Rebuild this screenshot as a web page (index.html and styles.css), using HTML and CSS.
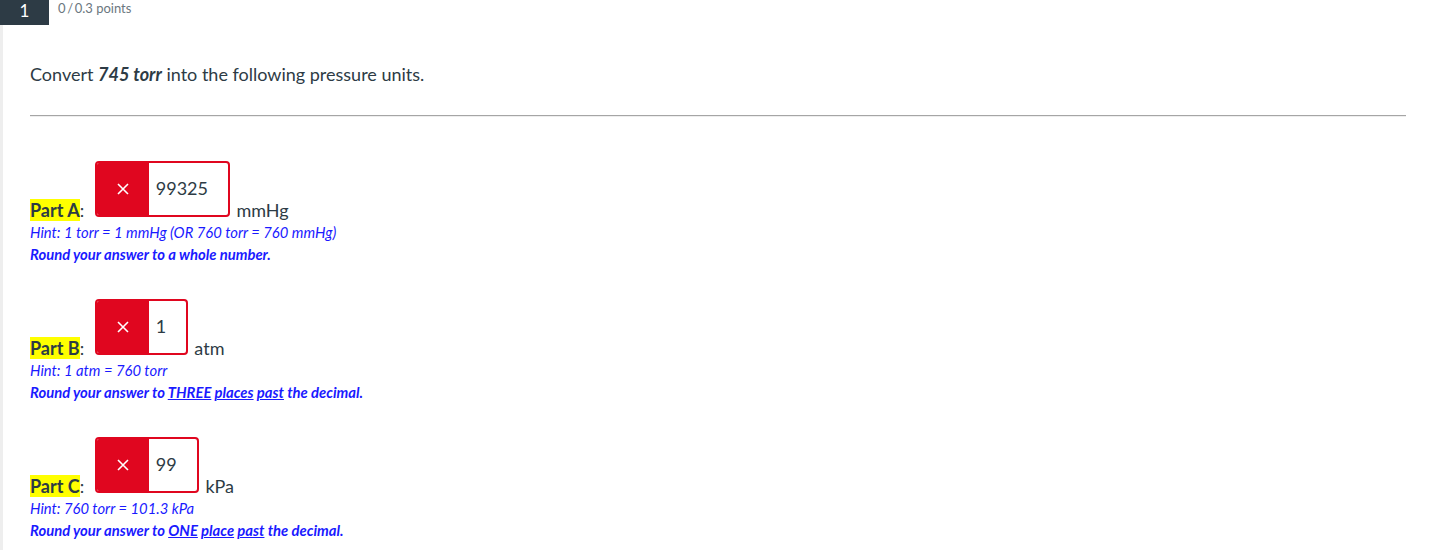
FILE: index.html
```html
<!DOCTYPE html>
<html lang="en">
<head>
    <meta charset="UTF-8">
    <meta name="viewport" content="width=device-width, initial-scale=1.0">
    <title>Question 1</title>
    <link rel="stylesheet" href="styles.css">
</head>
<body>
    <div class="question-header">
        <div class="question-number">1</div>
        <div class="points">0&#8201;/&#8201;0.3 points</div>
    </div>
    <div class="question-body">
        <p class="question-text">Convert <strong><em>745 torr</em></strong> into the following pressure units.</p>
        <hr class="divider">

        <div class="part">
            <p class="part-line">
                <strong class="part-label">Part A</strong>:
                <span class="answer answer-a">
                    <span class="answer-inner">
                        <span class="answer-mark">
                            <svg width="12" height="12" viewBox="0 0 12 12"><path d="M1 1 L11 11 M11 1 L1 11" stroke="#fff" stroke-width="1.6" fill="none"/></svg>
                        </span>
                        <span class="answer-value">99325</span>
                    </span>
                </span>
                <span class="unit">mmHg</span>
            </p>
            <p class="hint">Hint: 1 torr = 1 mmHg (OR 760 torr = 760 mmHg)</p>
            <p class="round">Round your answer to a whole number.</p>
        </div>

        <div class="part">
            <p class="part-line">
                <strong class="part-label">Part B</strong>:
                <span class="answer answer-b">
                    <span class="answer-inner">
                        <span class="answer-mark">
                            <svg width="12" height="12" viewBox="0 0 12 12"><path d="M1 1 L11 11 M11 1 L1 11" stroke="#fff" stroke-width="1.6" fill="none"/></svg>
                        </span>
                        <span class="answer-value">1</span>
                    </span>
                </span>
                <span class="unit">atm</span>
            </p>
            <p class="hint">Hint: 1 atm = 760 torr</p>
            <p class="round">Round your answer to <u>THREE</u> <u>places</u> <u>past</u> the decimal.</p>
        </div>

        <div class="part">
            <p class="part-line">
                <strong class="part-label">Part C</strong>:
                <span class="answer answer-c">
                    <span class="answer-inner">
                        <span class="answer-mark">
                            <svg width="12" height="12" viewBox="0 0 12 12"><path d="M1 1 L11 11 M11 1 L1 11" stroke="#fff" stroke-width="1.6" fill="none"/></svg>
                        </span>
                        <span class="answer-value">99</span>
                    </span>
                </span>
                <span class="unit">kPa</span>
            </p>
            <p class="hint">Hint: 760 torr = 101.3 kPa</p>
            <p class="round">Round your answer to <u>ONE</u> <u>place</u> <u>past</u> the decimal.</p>
        </div>
    </div>
</body>
</html>
```

FILE: styles.css
```css
body {
    font-family: Lato, "Open Sans", sans-serif;
    color: #2d3b45;
    background-color: #fff;
    margin: 0;
    padding: 0;
}
.question-header {
    display: flex;
    align-items: flex-start;
    height: 25px;
}
.question-number {
    width: 49px;
    height: 25px;
    line-height: 22px;
    background-color: #2d3b45;
    color: #fff;
    font-size: 17px;
    text-align: center;
}
.points {
    margin-left: 9px;
    font-size: 13px;
    line-height: 17px;
    color: #6b7780;
}
.question-body {
    border-left: 3px solid #eeeeee;
    padding: 0 26px 20px 27px;
    min-height: 525px;
    box-sizing: border-box;
}
.question-text {
    margin: 0;
    padding-top: 37px;
    font-size: 18px;
    line-height: 24px;
}
.divider {
    margin: 29px 0 0 0;
    border: 0;
    border-top: 1px solid #a5a5a5;
    border-bottom: 1px solid #eeeeee;
}
.part {
    margin-top: 34px;
}
.part:first-of-type {
    margin-top: 44px;
}
.part p {
    margin: 0;
}
.part-line {
    font-size: 18px;
    line-height: 22px;
}
.part-label {
    font-weight: 700;
    background-color: #ffff00;
}
.answer {
    display: inline-block;
    height: 56px;
    box-sizing: border-box;
    border: 2px solid #e0061f;
    border-radius: 4px;
    overflow: hidden;
    vertical-align: baseline;
    margin-left: 6px;
}
.answer-inner {
    display: flex;
    height: 100%;
}
.answer-mark {
    width: 52px;
    flex-shrink: 0;
    background-color: #e0061f;
    display: flex;
    align-items: center;
    justify-content: center;
}
.answer-value {
    padding-left: 7px;
    line-height: 50px;
    font-size: 18px;
    color: #2d3b45;
}
.answer-a { width: 135px; }
.answer-b { width: 93px; }
.answer-c { width: 104px; }
.unit {
    margin-left: 2px;
}
.hint {
    color: #1a1aff;
    font-style: italic;
    font-size: 14.8px;
    line-height: 22px;
}
.round {
    color: #1a1aff;
    font-style: italic;
    font-weight: 700;
    font-size: 14.8px;
    line-height: 22px;
}
.round u {
    text-decoration-thickness: 1px;
}
```
